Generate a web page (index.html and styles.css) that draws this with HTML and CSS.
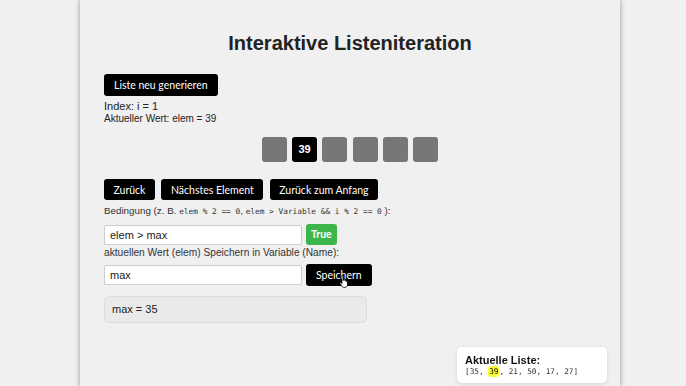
FILE: index.html
```html
<!DOCTYPE html>
<html lang="de">
<head>
    <meta charset="UTF-8">
    <title>Interaktive Listeniteration</title>
    <link rel="stylesheet" href="styles.css">
</head>
<body>
    <div class="page">
        <h1>Interaktive Listeniteration</h1>

        <button class="btn">Liste neu generieren</button>
        <div class="index">Index: i = 1</div>
        <div class="current">Aktueller Wert: elem = 39</div>

        <!-- list items -->
        <div class="boxes">
            <div class="box"></div>
            <div class="box active">39</div>
            <div class="box"></div>
            <div class="box"></div>
            <div class="box"></div>
            <div class="box"></div>
        </div>

        <div class="nav">
            <button class="btn">Zurück</button>
            <button class="btn">Nächstes Element</button>
            <button class="btn">Zurück zum Anfang</button>
        </div>

        <div class="hint hint-cond">Bedingung (z. B. <code>elem % 2 == 0</code>, <code>elem &gt; Variable &amp;&amp; i % 2 == 0</code> ):</div>
        <div class="row">
            <input type="text" class="field" value="elem > max">
            <span class="badge">True</span>
        </div>

        <div class="hint">aktuellen Wert (elem) Speichern in Variable (Name):</div>
        <div class="row row-save">
            <input type="text" class="field" value="max">
            <button class="btn">Speichern</button>
            <svg class="cursor" width="11" height="13" viewBox="0 0 11 13">
                <path d="M3 1.2c0-.7 1.4-.7 1.4 0v4.3l.1-1c0-.6 1.3-.6 1.3 0v1.1c0-.6 1.3-.6 1.3 0v1c.1-.6 1.3-.6 1.3 0v3.1c0 1.6-1 2.6-2.4 2.6H4.6c-1 0-1.5-.6-2-1.4L1 8.3c-.4-.7.5-1.3 1.1-.7L3 8.5z" fill="#fff" stroke="#000" stroke-width=".8"/>
            </svg>
        </div>

        <div class="result">max = 35</div>
    </div>

    <div class="list-panel">
        <div class="list-title">Aktuelle Liste:</div>
        <div class="list-values">[35, <mark>39</mark>, 21, 50, 17, 27]</div>
    </div>
</body>
</html>
```

FILE: styles.css
```css
body {
    margin: 0;
    background-color: #f0f0f0;
    font-family: "Liberation Sans", Arial, sans-serif;
    color: #222;
}

.page {
    width: 540px;
    min-height: 100vh;
    margin-left: 80px;
    padding: 31px 24px 0;
    box-sizing: border-box;
    background-color: #f0f0f0;
    box-shadow: 0 0 5px rgba(0,0,0,0.4);
}

h1 {
    margin: 0 0 19px;
    font-size: 20px;
    line-height: 24px;
    text-align: center;
    color: #222;
}

.btn {
    height: 22px;
    padding: 0 10px;
    border: none;
    border-radius: 3px;
    background-color: #000;
    color: white;
    font-family: Lato, "Open Sans", sans-serif;
    font-size: 10.5px;
    cursor: pointer;
}

.index {
    margin-top: 4px;
    font-size: 11px;
    line-height: 13px;
}

.current {
    font-size: 10px;
    line-height: 12px;
}

.boxes {
    display: flex;
    justify-content: center;
    gap: 5.3px;
    margin-top: 12px;
}

.box {
    width: 25px;
    height: 25px;
    border-radius: 3px;
    background-color: #777;
    color: white;
    font-size: 11px;
    font-weight: bold;
    line-height: 25px;
    text-align: center;
}

.box.active {
    background-color: #000;
}

.nav {
    display: flex;
    gap: 6.5px;
    margin-top: 17px;
}

.nav .btn {
    height: 21px;
    padding: 0 9.5px;
}

.hint {
    font-size: 10.2px;
    line-height: 15px;
    color: #333;
}

.hint-cond {
    font-size: 9.8px;
}

.nav + .hint {
    margin-top: 3px;
}

code {
    font-family: "DejaVu Sans Mono", monospace;
    font-size: 7.8px;
}

.row {
    display: flex;
    align-items: center;
    gap: 4px;
    margin-top: 5px;
}

.row-save {
    position: relative;
    margin-top: 4px;
}

.field {
    width: 198px;
    height: 20px;
    padding: 0 5px;
    box-sizing: border-box;
    border: 1px solid #ccc;
    border-radius: 2px;
    background-color: white;
    font-family: "Liberation Sans", Arial, sans-serif;
    font-size: 11px;
    color: #222;
}

.badge {
    height: 21px;
    padding: 0 5px;
    border-radius: 3px;
    background-color: #3cb54a;
    color: white;
    font-family: Lato, sans-serif;
    font-size: 10.5px;
    font-weight: bold;
    line-height: 21px;
}

.cursor {
    position: absolute;
    left: 235px;
    top: 11px;
}

.result {
    width: 263px;
    height: 27px;
    margin-top: 10px;
    padding: 0 7px;
    box-sizing: border-box;
    border: 1px solid #ddd;
    border-radius: 5px;
    background-color: #eaeaea;
    font-size: 11px;
    line-height: 25px;
}

.list-panel {
    position: fixed;
    right: 79px;
    bottom: 3px;
    width: 150px;
    height: 36px;
    padding: 7px 8px 0;
    box-sizing: border-box;
    border-radius: 5px;
    background-color: white;
    box-shadow: 0 1px 4px rgba(0,0,0,0.12);
}

.list-title {
    font-size: 11px;
    font-weight: bold;
    line-height: 12px;
    color: #111;
}

.list-values {
    font-family: "DejaVu Sans Mono", monospace;
    font-size: 7.7px;
    line-height: 11px;
    color: #333;
}

mark {
    padding: 1px 1px;
    border-radius: 3px;
    background-color: #ffff33;
}
```
